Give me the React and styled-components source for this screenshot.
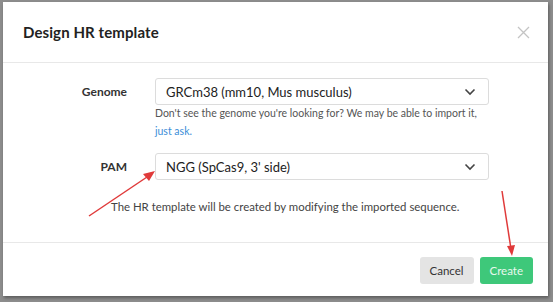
import React from "react";
import styled, { createGlobalStyle } from "styled-components";

const GlobalStyle = createGlobalStyle`
  html, body {
    margin: 0;
    padding: 0;
    background: #8d8d8d;
    font-family: Lato, "Open Sans", "Liberation Sans", sans-serif;
  }
`;

const Backdrop = styled.div`
  position: relative;
  width: 553px;
  height: 302px;
  padding: 2px 0 0 3px;
  box-sizing: border-box;
  overflow: hidden;
`;

const Modal = styled.div`
  width: 545px;
  height: 294px;
  background: #fff;
  display: flex;
  flex-direction: column;
  box-shadow: 1px 2px 3px rgba(0, 0, 0, 0.35);
`;

const Header = styled.div`
  height: 60px;
  display: flex;
  align-items: center;
  justify-content: space-between;
  padding: 0 18px 0 20px;
  border-bottom: 1px solid #e8e8e8;
`;

const Title = styled.h2`
  margin: 0;
  font-size: 15px;
  font-weight: 700;
  color: #222;
  letter-spacing: 0.1px;
`;

const Close = styled.button`
  border: 0;
  background: none;
  padding: 0;
  display: flex;
  cursor: pointer;
`;

const Body = styled.div`
  flex: 1;
  padding: 15px 0 0 0;
  display: flex;
  flex-direction: column;
`;

const FormRow = styled.div`
  display: grid;
  grid-template-columns: 124px 334px;
  column-gap: 28px;
  align-items: start;
  margin-bottom: ${(p) => p.$gap || 0}px;
`;

const Label = styled.label`
  text-align: right;
  font-size: 12px;
  font-weight: 700;
  color: #333;
  line-height: 27px;
`;

const Select = styled.div`
  height: 25px;
  border: 1px solid #dcdcdc;
  border-radius: 3px;
  display: flex;
  align-items: center;
  justify-content: space-between;
  padding: 0 12px 0 10px;
  font-size: 13px;
  color: #222;
`;

const Help = styled.div`
  font-size: 10.5px;
  color: #555;
  line-height: 18px;
  margin-top: -1px;

  a {
    color: #3b8ed8;
    text-decoration: none;
  }
`;

const Note = styled.p`
  margin: 20px 0 0 108px;
  font-size: 11.4px;
  color: #444;
`;

const Footer = styled.div`
  height: 51px;
  border-top: 1px solid #e8e8e8;
  display: flex;
  justify-content: flex-end;
  align-items: center;
  gap: 6px;
  padding: 2px 15px 0 0;
`;

const Button = styled.button`
  height: 27px;
  padding: 0 10px;
  border: 0;
  border-radius: 3px;
  font-family: inherit;
  font-size: 11.5px;
  background: ${(p) => (p.$primary ? "#3ec87a" : "#e4e4e4")};
  color: ${(p) => (p.$primary ? "#e8f8ee" : "#333")};
`;

const Annotations = styled.svg`
  position: absolute;
  left: 0;
  top: 0;
  pointer-events: none;
`;

const Chevron = () => (
  <svg width="12" height="8" viewBox="0 0 12 8">
    <path d="M1.5 1.5 L6 6 L10.5 1.5" fill="none" stroke="#444" strokeWidth="1.6" />
  </svg>
);

export default function App() {
  return (
    <Backdrop>
      <GlobalStyle />
      <Modal>
        <Header>
          <Title>Design HR template</Title>
          <Close aria-label="close">
            <svg width="13" height="13" viewBox="0 0 13 13">
              <path d="M1 1 L12 12 M12 1 L1 12" stroke="#c4c4c4" strokeWidth="1.3" />
            </svg>
          </Close>
        </Header>
        <Body>
          <FormRow $gap={13}>
            <Label>Genome</Label>
            <div>
              <Select>
                GRCm38 (mm10, Mus musculus)
                <Chevron />
              </Select>
              <Help>
                Don't see the genome you're looking for? We may be able to import it,
                <br />
                <a href="#">just ask.</a>
              </Help>
            </div>
          </FormRow>
          <FormRow>
            <Label>PAM</Label>
            <Select>
              NGG (SpCas9, 3' side)
              <Chevron />
            </Select>
          </FormRow>
          <Note>The HR template will be created by modifying the imported sequence.</Note>
        </Body>
        <Footer>
          <Button>Cancel</Button>
          <Button $primary>Create</Button>
        </Footer>
      </Modal>
      <Annotations width="553" height="302" viewBox="0 0 553 302">
        <line x1="89" y1="216" x2="150" y2="175" stroke="#e03a3a" strokeWidth="1.5" />
        <polygon points="155,171 143,174 149,181" fill="#e03a3a" />
        <line x1="502" y1="191" x2="511" y2="249" stroke="#e03a3a" strokeWidth="1.5" />
        <polygon points="512,256 507,246 515,245" fill="#e03a3a" />
      </Annotations>
    </Backdrop>
  );
}
